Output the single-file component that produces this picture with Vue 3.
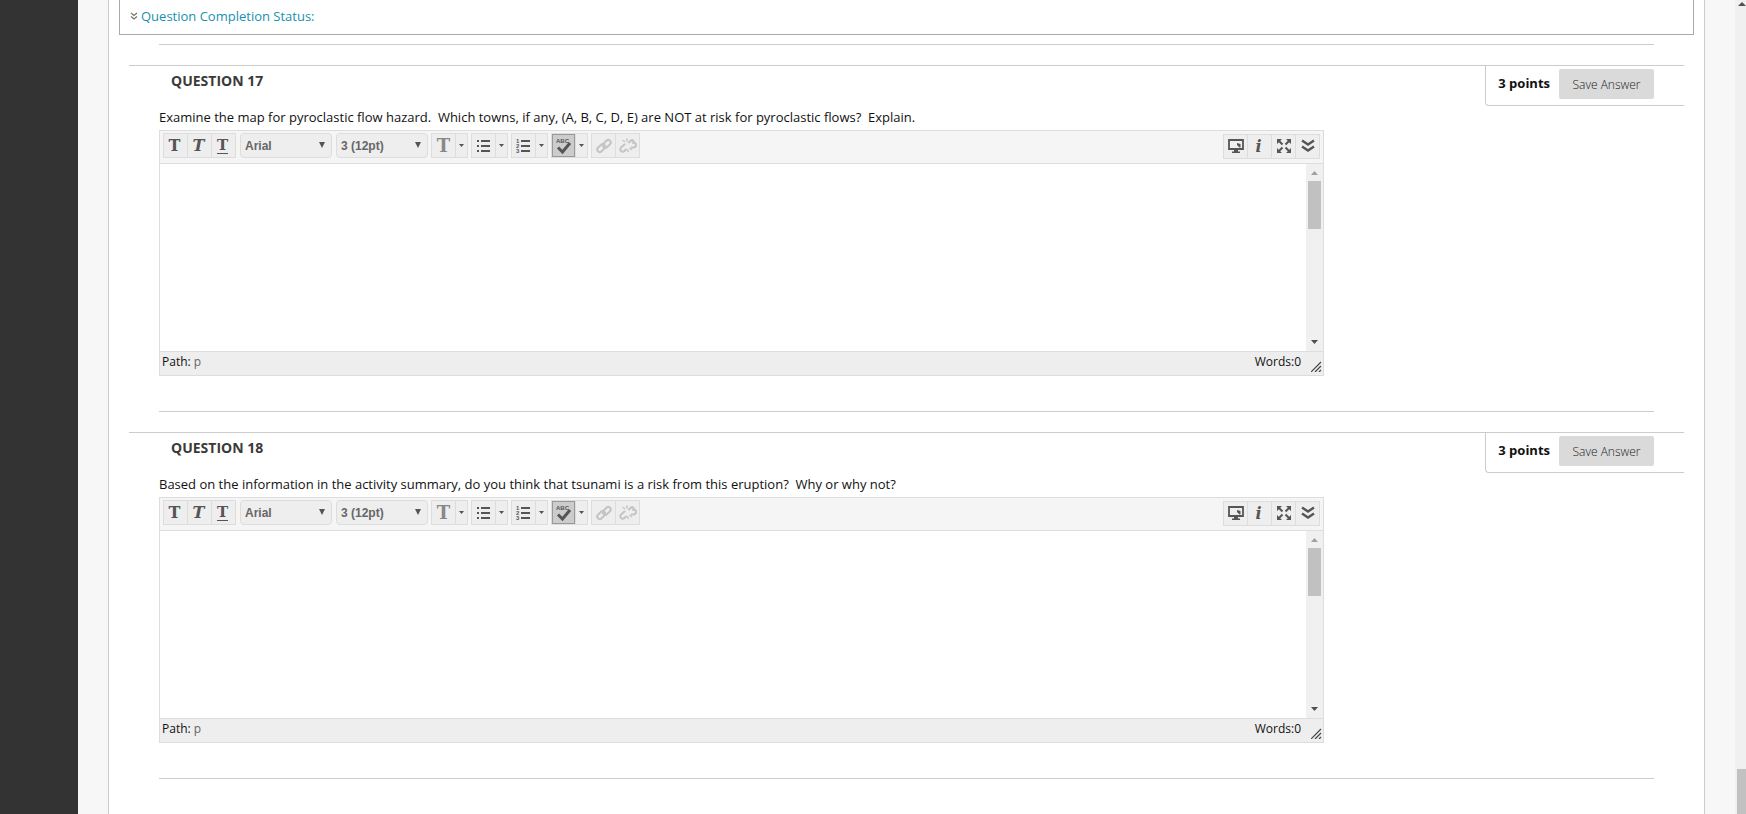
<script setup>
import { ref } from 'vue'

const fonts = ['Arial', 'Courier New', 'Georgia', 'Verdana']
const sizes = ['1 (8pt)', '2 (10pt)', '3 (12pt)', '4 (14pt)', '5 (18pt)']

const questions = ref([
  {
    id: 17,
    points: 3,
    text: 'Examine the map for pyroclastic flow hazard.  Which towns, if any, (A, B, C, D, E) are NOT at risk for pyroclastic flows?  Explain.',
    font: 'Arial',
    size: '3 (12pt)',
    answer: '',
  },
  {
    id: 18,
    points: 3,
    text: 'Based on the information in the activity summary, do you think that tsunami is a risk from this eruption?  Why or why not?',
    font: 'Arial',
    size: '3 (12pt)',
    answer: '',
  },
])

function countWords(text) {
  return text.split(/\s+/).filter(Boolean).length
}
</script>

<template>
  <div class="page">
    <div class="page__side"></div>
    <main class="content">
      <div class="status">
        <svg class="status__icon" width="8" height="8" viewBox="0 0 8 8" aria-hidden="true">
          <path d="M1 1l3 2.500L7 1M1 4.500l3 2.500 3-2.500" fill="none" stroke="#777" stroke-width="1.300" />
        </svg>
        <a href="#">Question Completion Status:</a>
      </div>
      <hr class="divider divider--first" />

      <template v-for="q in questions" :key="q.id">
        <section class="question">
          <header class="question__head">
            <h3>QUESTION {{ q.id }}</h3>
            <div class="points">
              <strong>{{ q.points }} points</strong>
              <button type="button" class="save">Save Answer</button>
            </div>
          </header>

          <div class="question__body">
            <label class="question__text" :for="`answer-${q.id}`">{{ q.text }}</label>

            <div class="editor">
              <div class="toolbar">
                <div class="group">
                  <button type="button" class="tool glyph" aria-label="Bold">T</button>
                  <button type="button" class="tool glyph glyph--italic" aria-label="Italic">T</button>
                  <button type="button" class="tool glyph glyph--underline" aria-label="Underline"><span>T</span></button>
                </div>
                <div class="picker">
                  <select v-model="q.font" aria-label="Font family">
                    <option v-for="f in fonts" :key="f">{{ f }}</option>
                  </select>
                  <svg class="picker__arrow" width="6" height="6" viewBox="0 0 6 6" aria-hidden="true"><path d="M0 0h6L3 6z" /></svg>
                </div>
                <div class="picker">
                  <select v-model="q.size" aria-label="Font size">
                    <option v-for="s in sizes" :key="s">{{ s }}</option>
                  </select>
                  <svg class="picker__arrow" width="6" height="6" viewBox="0 0 6 6" aria-hidden="true"><path d="M0 0h6L3 6z" /></svg>
                </div>
                <div class="group">
                  <button type="button" class="tool glyph glyph--color" aria-label="Text color">T</button>
                  <button type="button" class="tool tool--arrow" aria-label="More text colors">
                    <svg width="5" height="3" viewBox="0 0 5 3"><path d="M0 0h5L2.500 3z" /></svg>
                  </button>
                </div>
                <div class="group">
                  <button type="button" class="tool" aria-label="Bulleted list">
                    <svg width="13" height="12" viewBox="0 0 13 12">
                      <path d="M0 0h2v2H0zM0 5h2v2H0zM0 10h2v2H0zM4 0h9v2H4zM4 5h9v2H4zM4 10h9v2H4z" />
                    </svg>
                  </button>
                  <button type="button" class="tool tool--arrow" aria-label="More bullet styles">
                    <svg width="5" height="3" viewBox="0 0 5 3"><path d="M0 0h5L2.500 3z" /></svg>
                  </button>
                </div>
                <div class="group">
                  <button type="button" class="tool" aria-label="Numbered list">
                    <svg width="15" height="15" viewBox="0 0 15 15">
                      <path d="M5 2h9v2H5zM5 7h9v2H5zM5 12h9v2H5z" />
                      <text x="0" y="5" class="tiny">1</text>
                      <text x="0" y="10" class="tiny">2</text>
                      <text x="0" y="15" class="tiny">3</text>
                    </svg>
                  </button>
                  <button type="button" class="tool tool--arrow" aria-label="More number styles">
                    <svg width="5" height="3" viewBox="0 0 5 3"><path d="M0 0h5L2.500 3z" /></svg>
                  </button>
                </div>
                <div class="group">
                  <button type="button" class="tool tool--pressed" aria-label="Spell check" aria-pressed="true">
                    <svg width="18" height="18" viewBox="0 0 18 18">
                      <text x="1" y="6" class="tiny">ABC</text>
                      <path d="M3 10.500L7.500 15 15 6" fill="none" stroke="#555" stroke-width="3" />
                    </svg>
                  </button>
                  <button type="button" class="tool tool--arrow" aria-label="Spell check languages">
                    <svg width="5" height="3" viewBox="0 0 5 3"><path d="M0 0h5L2.500 3z" /></svg>
                  </button>
                </div>
                <div class="group">
                  <button type="button" class="tool" aria-label="Insert link" disabled>
                    <svg width="16" height="16" viewBox="0 0 16 16">
                      <g fill="none" stroke="#c4c4c4" stroke-width="2" stroke-linecap="round" transform="rotate(-45 8 8)">
                        <rect x="0" y="5" width="9" height="5" rx="2.500" />
                        <rect x="7" y="6" width="9" height="5" rx="2.500" />
                      </g>
                    </svg>
                  </button>
                  <button type="button" class="tool" aria-label="Remove link" disabled>
                    <svg width="18" height="16" viewBox="0 0 18 16">
                      <g fill="none" stroke="#c4c4c4" stroke-width="2" stroke-linecap="round">
                        <path d="M5.500 6.500L2 9.500C0 12 3 15 5.500 13L7 11.500" />
                        <path d="M10 4.500l1.500-1.500c2-2 4 0 2.500 2M12.500 9.500h1.500c4 0 3.500-4.500 1-5" />
                        <path d="M4 2.500l1.500 1M8 1v2M11 10.500l1.500 1M9 12v1.500" stroke-width="1.500" />
                      </g>
                    </svg>
                  </button>
                </div>
                <div class="group group--right">
                  <button type="button" class="tool" aria-label="Preview">
                    <svg width="16" height="16" viewBox="0 0 16 16">
                      <path d="M1 2h14v9H1z" fill="none" stroke="#555" stroke-width="1.800" />
                      <path d="M6 12h4v1.500h2V15H4v-1.500h2zM9 5l3.500 1v3.500h-1L9 7z" />
                    </svg>
                  </button>
                  <button type="button" class="tool glyph glyph--italic" aria-label="Help">i</button>
                  <button type="button" class="tool" aria-label="Full screen">
                    <svg width="14" height="14" viewBox="0 0 14 14">
                      <path d="M0 0h5L0 5zM14 0v5L9 0zM0 14V9l5 5zM14 14H9l5-5z" />
                      <path d="M1.500 1.500l4 4M12.500 1.500l-4 4M1.500 12.500l4-4M12.500 12.500l-4-4" stroke="#555" stroke-width="2" />
                    </svg>
                  </button>
                  <button type="button" class="tool" aria-label="Show more">
                    <svg width="14" height="14" viewBox="0 0 14 14">
                      <path d="M1 1.500l6 4 6-4M1 7.500l6 4 6-4" fill="none" stroke="#555" stroke-width="2.400" />
                    </svg>
                  </button>
                </div>
              </div>

              <div class="editor__area">
                <textarea :id="`answer-${q.id}`" v-model="q.answer"></textarea>
                <div class="scroll" aria-hidden="true">
                  <svg width="7" height="4" viewBox="0 0 7 4"><path d="M0 4h7L3.500 0z" fill="#a0a0a0" /></svg>
                  <div class="scroll__thumb"></div>
                  <svg class="scroll__down" width="7" height="4" viewBox="0 0 7 4"><path d="M0 0h7L3.500 4z" fill="#505050" /></svg>
                </div>
              </div>

              <div class="editor__foot">
                <span>Path: <a href="#">p</a></span>
                <span class="words">Words:{{ countWords(q.answer) }}</span>
                <svg class="resize" width="11" height="11" viewBox="0 0 11 11" aria-hidden="true">
                  <path d="M0 11L10 1M4 11l6-6M8 11l2-2" fill="none" stroke="#444" stroke-width="1.200" />
                </svg>
              </div>
            </div>
          </div>
        </section>
        <hr class="divider" />
      </template>
    </main>
    <div class="page__scroll" aria-hidden="true">
      <svg width="8" height="4" viewBox="0 0 8 4"><path d="M0 4h8L4 0z" fill="#505050" /></svg>
      <div class="page__thumb"></div>
    </div>
  </div>
</template>

<style>
body {
  background: #f7f7f7;
}
</style>

<style scoped>
.page {
  display: flex;
  min-height: 100vh;
  color: #111;
  font-family: "Open Sans", sans-serif;
  font-size: 13px;
  line-height: 18px;
}

.page__side {
  flex: none;
  width: 78px;
  background: #333;
}

.page__scroll {
  display: flex;
  flex: none;
  flex-direction: column;
  align-items: flex-end;
  justify-content: space-between;
  width: 11px;
  padding-top: 2px;
  box-sizing: border-box;
  background: #f0f0f0;
}

.page__thumb {
  width: 9px;
  height: 45px;
  background: #c1c1c1;
}

.content {
  flex: 1;
  min-width: 0;
  margin: 0 30px;
  border: solid #ccc;
  border-width: 0 1px;
  background: #fff;
}

.status {
  display: flex;
  align-items: center;
  gap: 3px;
  height: 32px;
  margin: 0 10px;
  padding: 0 10px 2px;
  border: solid #aaa;
  border-width: 0 1px 1px;
}

.status a {
  color: #1791ad;
  text-decoration: none;
}

.divider {
  height: 1px;
  margin: 35px 50px 20px;
  border: 0;
  background: #ccc;
}

.divider--first {
  margin-top: 9px;
}

.question {
  margin: 0 20px;
  border-top: 1px solid #ccc;
}

.question__head {
  display: flex;
  align-items: flex-start;
  justify-content: space-between;
}

.question__head h3 {
  margin: 5px 0 0 42px;
  color: #3a3a3a;
  font-size: 14px;
  font-weight: 700;
  line-height: 20px;
}

.points {
  display: flex;
  align-items: flex-start;
  gap: 9px;
  height: 36px;
  padding: 3px 30px 0 12px;
  border: solid #ccc;
  border-width: 0 0 1px 1px;
  border-radius: 0 0 0 4px;
}

.points strong {
  line-height: 28px;
}

.save {
  width: 95px;
  height: 30px;
  padding: 0;
  border: 0;
  border-radius: 2px;
  color: #222;
  background: #dadada;
  font: 300 12px "Open Sans", sans-serif;
}

.question__body {
  padding: 2px 30px 0;
}

.question__text {
  display: block;
  margin-bottom: 4px;
  white-space: pre-wrap;
}

.editor {
  max-width: 1163px;
  border: 1px solid #ddd;
}

.toolbar {
  display: flex;
  align-items: center;
  gap: 3px;
  height: 32px;
  padding: 0 3px;
  border-bottom: 1px solid #ddd;
  background: #f5f5f5;
}

.group {
  display: flex;
  height: 23px;
  margin-bottom: 3px;
  border: 1px solid #ddd;
  background: #eee;
}

.group--right {
  margin-bottom: 2px;
  margin-left: auto;
}

.tool {
  display: flex;
  align-items: center;
  justify-content: center;
  width: 23px;
  height: 23px;
  padding: 0;
  border: 0;
  background: none;
}

.tool + .tool {
  width: 24px;
  border-left: 1px solid #ddd;
}

.tool + .tool--arrow {
  width: 12px;
}

.tool svg,
.picker__arrow {
  fill: #555;
}

.tool--pressed {
  border: 1px solid #999;
  background: #ccc;
}

.tiny {
  fill: #555;
  font: bold 6px "Liberation Sans", sans-serif;
}

.tool.glyph {
  padding-right: 2px;
  color: #555;
  font: bold 16px "DejaVu Serif", serif;
}

.tool.glyph--italic {
  font-style: italic;
}

.glyph--underline span {
  border-bottom: 1px solid #555;
  font-size: 15px;
  line-height: 15px;
}

.tool.glyph--color {
  padding-right: 0;
  color: #888;
  font-size: 18px;
}

.picker {
  position: relative;
  margin: 0 0 3px 1px;
}

.picker select {
  display: block;
  width: 92px;
  height: 25px;
  padding: 1px 4px 0;
  border: 1px solid #ddd;
  border-radius: 4px;
  appearance: none;
  color: #666;
  background: #eee;
  font: bold 12px "Liberation Sans", sans-serif;
}

.picker__arrow {
  position: absolute;
  top: 9px;
  right: 7px;
  pointer-events: none;
}

.editor__area {
  display: flex;
  height: 187px;
}

.editor__area textarea {
  flex: 1;
  min-width: 0;
  padding: 8px;
  border: 0;
  outline: 0;
  resize: none;
  font: 16px "Liberation Sans", sans-serif;
}

.scroll {
  display: flex;
  flex-direction: column;
  align-items: center;
  width: 17px;
  padding: 7px 0;
  box-sizing: border-box;
  background: #f0f0f0;
}

.scroll__thumb {
  width: 13px;
  height: 48px;
  margin-top: 6px;
  background: #c1c1c1;
}

.scroll__down {
  margin-top: auto;
}

.editor__foot {
  display: flex;
  height: 23px;
  padding: 0 1px 0 2px;
  border-top: 1px solid #ddd;
  background: #eee;
  font-size: 12px;
  line-height: 20px;
}

.editor__foot a {
  color: #666;
  text-decoration: none;
}

.words {
  margin-left: auto;
}

.resize {
  align-self: flex-end;
  margin: 0 0 3px 10px;
}
</style>
